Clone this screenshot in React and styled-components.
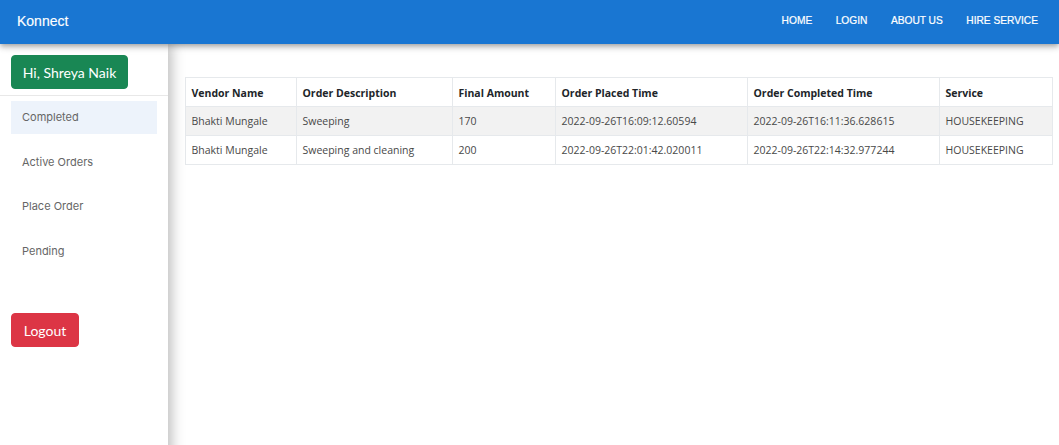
import React from "react";
import styled, { createGlobalStyle } from "styled-components";

const GlobalStyle = createGlobalStyle`
  html, body {
    margin: 0;
    padding: 0;
    background: #fff;
    overflow: hidden;
  }
`;

const Page = styled.div`
  width: 1059px;
  height: 445px;
  display: flex;
  flex-direction: column;
  font-family: Roboto, "Liberation Sans", sans-serif;
`;

const AppBar = styled.header`
  height: 44px;
  flex: none;
  display: flex;
  align-items: center;
  justify-content: space-between;
  padding: 0 21px 0 17px;
  background: #1976d2;
  color: #fff;
  box-shadow: 0 2px 4px -1px rgba(0, 0, 0, 0.2), 0 4px 5px rgba(0, 0, 0, 0.14), 0 1px 10px rgba(0, 0, 0, 0.12);
  position: relative;
  z-index: 2;
`;

const Brand = styled.div`
  font-family: "Liberation Sans", sans-serif;
  font-size: 14px;
  margin-top: -3px;
  -webkit-text-stroke: 0.15px #fff;
`;

const NavLinks = styled.nav`
  display: flex;
  gap: 23.5px;
  margin-top: -3px;
`;

const NavLink = styled.a`
  font-family: "Liberation Sans", sans-serif;
  font-size: 10.2px;
  color: #fff;
  -webkit-text-stroke: 0.2px #fff;
`;

const Body = styled.div`
  flex: 1;
  display: flex;
  min-height: 0;
`;

const Sidebar = styled.aside`
  width: 168px;
  flex: none;
  margin-bottom: -20px;
  background: #fff;
  box-shadow: 4px 0 12px rgba(0, 0, 0, 0.25);
  position: relative;
  z-index: 1;
`;

const Greeting = styled.div`
  padding: 11px 11px 6px;
  border-bottom: 1px solid #e8e8e8;
`;

const Button = styled.button`
  display: block;
  width: ${props => props.$width}px;
  height: 34px;
  padding: 0;
  border: 1px solid ${props => props.$color};
  border-radius: 4px;
  background: ${props => props.$color};
  color: #fff;
  font-family: Lato, sans-serif;
  font-size: 14px;
`;

const Menu = styled.div`
  padding: 5px 11px 0;
`;

const MenuItem = styled.div`
  height: 33px;
  margin-bottom: 11.5px;
  padding-left: 11px;
  padding-bottom: 1px;
  box-sizing: border-box;
  display: flex;
  align-items: center;
  background: ${props => (props.$active ? "#edf3fb" : "transparent")};
  color: #666;
  font-family: Inter, sans-serif;
  font-size: 11px;
`;

const LogoutRow = styled.div`
  padding: 34px 11px 0;
`;

const Main = styled.main`
  flex: 1;
  padding: 33px 7px 0 17px;
`;

const Table = styled.table`
  width: 867px;
  border-collapse: collapse;
  table-layout: fixed;
  font-family: "Open Sans", sans-serif;
  font-size: 10.5px;
  color: #484848;
`;

const Th = styled.th`
  height: 27px;
  padding: 1px 5.5px 0;
  border: 1px solid #e6e9ec;
  text-align: left;
  font-weight: 700;
  color: #212529;
`;

const Td = styled.td`
  height: 27px;
  padding: 0 5.5px 1px;
  border: 1px solid #e6e9ec;
  white-space: nowrap;
`;

const Row = styled.tr`
  background: ${props => (props.$striped ? "#f2f2f2" : "#fff")};
`;

const columns = [
  { label: "Vendor Name", width: 111 },
  { label: "Order Description", width: 156 },
  { label: "Final Amount", width: 103 },
  { label: "Order Placed Time", width: 192 },
  { label: "Order Completed Time", width: 192 },
  { label: "Service", width: 113 },
];

const orders = [
  ["Bhakti Mungale", "Sweeping", "170", "2022-09-26T16:09:12.60594", "2022-09-26T16:11:36.628615", "HOUSEKEEPING"],
  ["Bhakti Mungale", "Sweeping and cleaning", "200", "2022-09-26T22:01:42.020011", "2022-09-26T22:14:32.977244", "HOUSEKEEPING"],
];

const navItems = ["HOME", "LOGIN", "ABOUT US", "HIRE SERVICE"];
const menuItems = ["Completed", "Active Orders", "Place Order", "Pending"];

export default function App() {
  return (
    <Page>
      <GlobalStyle />
      <AppBar>
        <Brand>Konnect</Brand>
        <NavLinks>
          {navItems.map(item => <NavLink key={item}>{item}</NavLink>)}
        </NavLinks>
      </AppBar>
      <Body>
        <Sidebar>
          <Greeting>
            <Button $color="#198754" $width={117}>Hi, Shreya Naik</Button>
          </Greeting>
          <Menu>
            {menuItems.map((item, i) => (
              <MenuItem key={item} $active={i === 0}>{item}</MenuItem>
            ))}
          </Menu>
          <LogoutRow>
            <Button $color="#dc3545" $width={68}>Logout</Button>
          </LogoutRow>
        </Sidebar>
        <Main>
          <Table>
            <colgroup>
              {columns.map(col => <col key={col.label} style={{ width: col.width }} />)}
            </colgroup>
            <thead>
              <tr>
                {columns.map(col => <Th key={col.label}>{col.label}</Th>)}
              </tr>
            </thead>
            <tbody>
              {orders.map((order, i) => (
                <Row key={order[3]} $striped={i === 0}>
                  {order.map((cell, j) => <Td key={j}>{cell}</Td>)}
                </Row>
              ))}
            </tbody>
          </Table>
        </Main>
      </Body>
    </Page>
  );
}
